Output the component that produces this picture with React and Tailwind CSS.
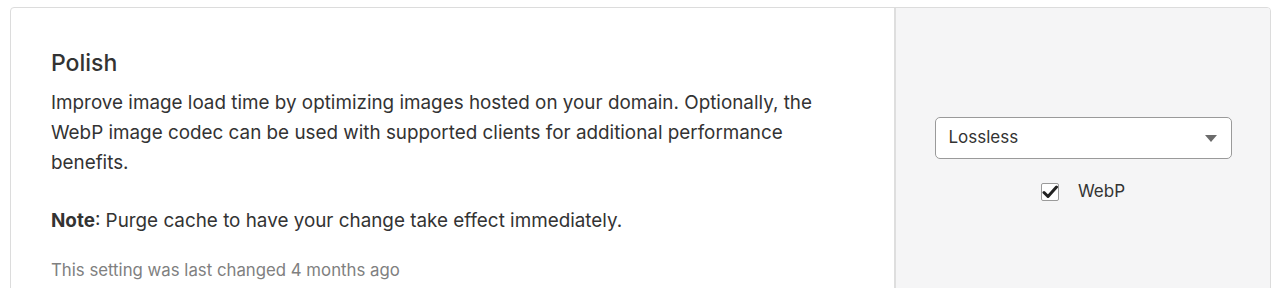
export default function App() {
  return (
    <div className="min-h-[288px] bg-white pl-[10px] pt-[7px] font-['Inter','Liberation_Sans',sans-serif] text-[#333]">
      <div className="flex h-[320px] w-[1261px] overflow-hidden rounded-t-[4px] border border-[#dcdcdc]">
        <div className="w-[883px] shrink-0 pl-[40px] pr-[40px] pt-[41px]">
          <h3 className="text-[23px] font-medium leading-[28px] text-[#333]">Polish</h3>
          <p className="mt-[11px] max-w-[780px] text-[18.85px] leading-[30px]">
            Improve image load time by optimizing images hosted on your domain. Optionally, the WebP image codec can be
            used with supported clients for additional performance benefits.
          </p>
          <p className="mt-[28px] text-[18.85px] leading-[30px]">
            <span className="font-bold">Note</span>: Purge cache to have your change take effect immediately.
          </p>
          <p className="mt-[22px] text-[16.8px] leading-[24px] text-[#808080]">
            This setting was last changed 4 months ago
          </p>
        </div>
        <div className="flex flex-1 flex-col items-center border-l-2 border-[#dedede] bg-[#f5f5f6] pt-[109px]">
          <div className="flex h-[42px] w-[297px] items-center justify-between rounded-[5px] border border-[#9a9a9a] bg-white pl-[13px] pr-[14px]">
            <span className="text-[17px]">Lossless</span>
            <svg width="12" height="7" viewBox="0 0 12 7">
              <path d="M0 0 L12 0 L6 7 Z" fill="#6b6b6b" />
            </svg>
          </div>
          <label className="mt-[20px] flex items-center gap-[19px]">
            <span className="flex h-[18px] w-[18px] items-center justify-center rounded-[2px] border border-[#9a9a9a] bg-white">
              <svg width="16" height="14" viewBox="0 0 16 14">
                <path d="M2 7.5 L6 11.5 L14.5 2" fill="none" stroke="#222" strokeWidth="3" strokeLinecap="round" strokeLinejoin="round" />
              </svg>
            </span>
            <span className="text-[17px]">WebP</span>
          </label>
        </div>
      </div>
    </div>
  )
}
